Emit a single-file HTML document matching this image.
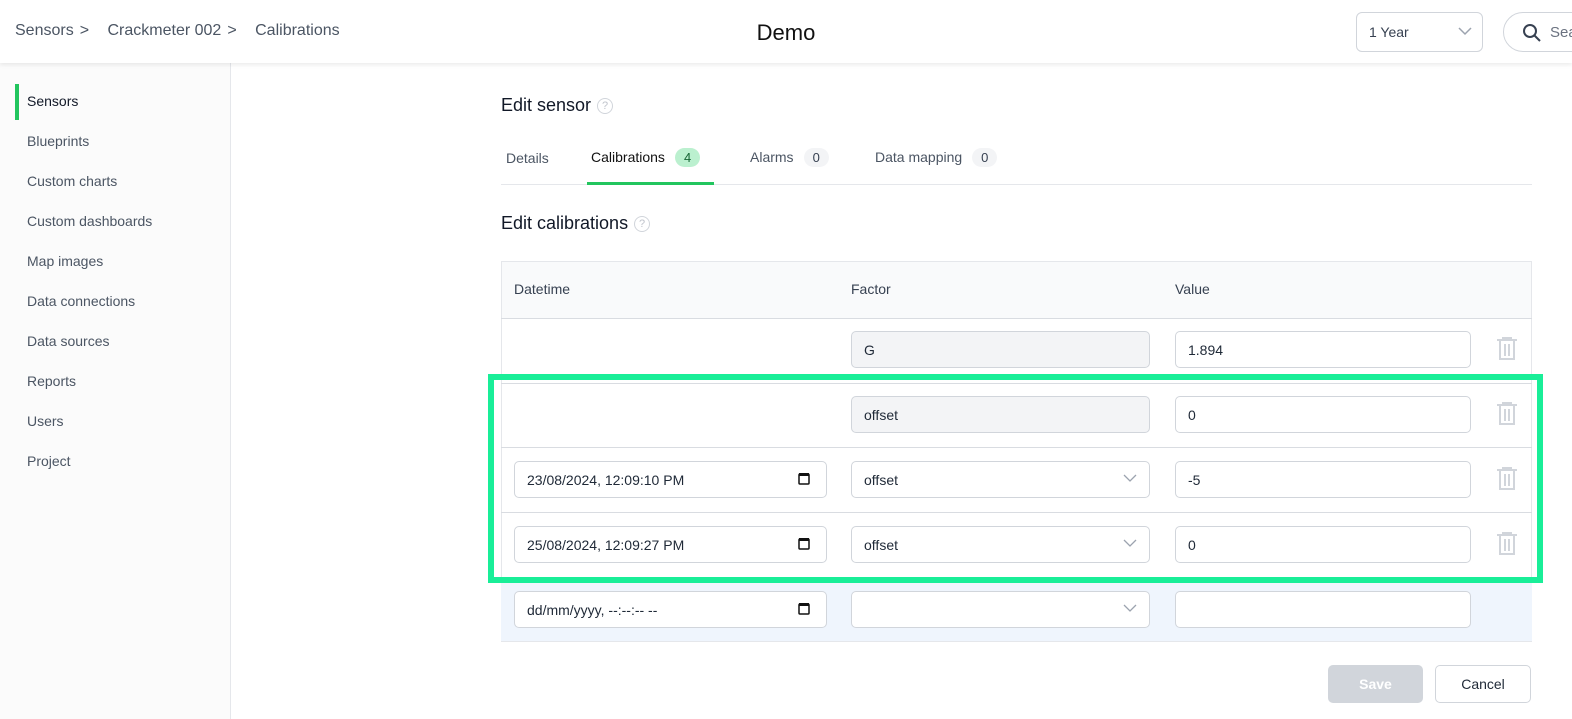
<!DOCTYPE html>
<html><head><meta charset="utf-8"><style>
*{box-sizing:border-box;margin:0;padding:0}
body{width:1572px;height:719px;overflow:hidden;background:#fff;font-family:"Liberation Sans",sans-serif;color:#111827;position:relative}
.hdr{position:absolute;left:0;top:0;width:1572px;height:63px;background:#fff;box-shadow:0 2px 4px rgba(0,0,0,.08);z-index:2}
.bc{position:absolute;left:15px;top:22px;font-size:16px;color:#4b5563}
.bc span{margin-right:6px}
.title{position:absolute;left:0;width:1572px;text-align:center;top:20px;font-size:22px;color:#111}
.sel{position:absolute;left:1356px;top:12px;width:127px;height:40px;border:1px solid #d1d5db;border-radius:6px;font-size:14px;padding:11px 12px;color:#374151}
.srch{position:absolute;left:1503px;top:12px;width:120px;height:40px;border:1px solid #d1d5db;border-radius:20px;font-size:15px;padding:11px 0 0 46px;color:#6b7280}
.side{position:absolute;left:0;top:63px;width:231px;height:656px;background:#fbfbfb;border-right:1px solid #e5e7eb}
.side div{position:absolute;left:27px;font-size:14px;color:#4b5563}
.abs{position:absolute}
.inp{position:absolute;height:37px;border:1px solid #d1d5db;border-radius:5px;background:#fff;font-size:14px;color:#1f2937;padding:10px 12px}
.ro{background:#f3f4f6}
.row{position:absolute;left:501px;width:1031px;border-top:1px solid #d9dce1}
.badge{display:inline-block;border-radius:10px;padding:2px 9px;font-size:13px;margin-left:10px;background:#f3f4f6;color:#374151}
.help{display:inline-block;width:16px;height:16px;border:1px solid #d1d5db;border-radius:50%;font-size:11px;color:#c0c4cc;text-align:center;line-height:14px;vertical-align:middle;margin-left:6px}
</style></head><body>
<div class="hdr">
<div class="bc"><span>Sensors</span><span>&gt;</span> <span style="margin-left:8px">Crackmeter 002</span><span>&gt;</span> <span style="margin-left:8px">Calibrations</span></div>
<div class="title">Demo</div>
<div class="sel">1 Year<svg style="position:absolute;right:10px;top:14px" width="14" height="9"><path d="M1 1l6 6 6-6" fill="none" stroke="#9ca3af" stroke-width="1.5"/></svg></div>
<div class="srch"><svg style="position:absolute;left:18px;top:10px" width="20" height="20"><circle cx="8" cy="8" r="6" fill="none" stroke="#374151" stroke-width="2"/><path d="M12.5 12.5L18 18" stroke="#374151" stroke-width="2"/></svg>Search</div>
</div>
<div class="side">
<span style="position:absolute;left:15px;top:21px;width:4px;height:36px;background:#22c55e"></span>
<div style="top:30px;color:#111827">Sensors</div>
<div style="top:70px">Blueprints</div>
<div style="top:110px">Custom charts</div>
<div style="top:150px">Custom dashboards</div>
<div style="top:190px">Map images</div>
<div style="top:230px">Data connections</div>
<div style="top:270px">Data sources</div>
<div style="top:310px">Reports</div>
<div style="top:350px">Users</div>
<div style="top:390px">Project</div>
</div>
<div class="abs" style="left:501px;top:95px;font-size:18px">Edit sensor<span class="help">?</span></div>
<div class="abs" style="left:501px;top:184px;width:1031px;border-top:1px solid #e5e7eb"></div>
<div class="abs" style="left:506px;top:150px;font-size:14px;color:#4b5563">Details</div>
<div class="abs" style="left:591px;top:148px;font-size:14px;color:#111">Calibrations<span class="badge" style="background:#bbf0cf;color:#166534">4</span></div>
<div class="abs" style="left:587px;top:182px;width:127px;height:3px;background:#22c55e"></div>
<div class="abs" style="left:750px;top:148px;font-size:14px;color:#4b5563">Alarms<span class="badge">0</span></div>
<div class="abs" style="left:875px;top:148px;font-size:14px;color:#4b5563">Data mapping<span class="badge">0</span></div>
<div class="abs" style="left:501px;top:213px;font-size:18px">Edit calibrations<span class="help">?</span></div>
<div class="abs" style="left:501px;top:261px;width:1031px;height:381px;border:1px solid #e5e7eb;background:#fff"></div>
<div class="abs" style="left:502px;top:262px;width:1029px;height:56px;background:#f9fafb"></div>
<div class="abs" style="left:514px;top:281px;font-size:14px;color:#374151">Datetime</div>
<div class="abs" style="left:851px;top:281px;font-size:14px;color:#374151">Factor</div>
<div class="abs" style="left:1175px;top:281px;font-size:14px;color:#374151">Value</div>
<div class="row" style="top:318px"></div>
<div class="row" style="top:383px"></div>
<div class="row" style="top:447px"></div>
<div class="row" style="top:512px"></div>
<div class="row" style="top:577px;height:64px;background:#eff5fd"></div>
<div class="inp ro" style="left:851px;top:331px;width:299px">G</div>
<div class="inp" style="left:1175px;top:331px;width:296px">1.894</div>
<div class="inp ro" style="left:851px;top:396px;width:299px">offset</div>
<div class="inp" style="left:1175px;top:396px;width:296px">0</div>
<div class="inp" style="left:514px;top:461px;width:313px">23/08/2024, 12:09:10 PM</div>
<div class="inp" style="left:851px;top:461px;width:299px">offset</div>
<div class="inp" style="left:1175px;top:461px;width:296px">-5</div>
<div class="inp" style="left:514px;top:526px;width:313px">25/08/2024, 12:09:27 PM</div>
<div class="inp" style="left:851px;top:526px;width:299px">offset</div>
<div class="inp" style="left:1175px;top:526px;width:296px">0</div>
<div class="inp" style="left:514px;top:591px;width:313px">dd/mm/yyyy, --:--:-- --</div>
<div class="inp" style="left:851px;top:591px;width:299px"></div>
<div class="inp" style="left:1175px;top:591px;width:296px"></div>
<svg class="abs" style="left:0;top:0" width="1572" height="719">
<g fill="none" stroke="#111" stroke-width="1.5">
<rect x="799" y="474" width="10" height="10" rx="1"/><rect x="799" y="539" width="10" height="10" rx="1"/><rect x="799" y="604" width="10" height="10" rx="1"/>
</g>
<g fill="#111"><rect x="799" y="473" width="10" height="3"/><rect x="799" y="538" width="10" height="3"/><rect x="799" y="603" width="10" height="3"/></g>
<g fill="none" stroke="#9ca3af" stroke-width="1.3">
<path d="M1124 475l6 6 6-6M1124 540l6 6 6-6M1124 605l6 6 6-6"/>
</g>
<g fill="none" stroke="#d1d5db" stroke-width="2">
<path d="M1497 340h20M1503 340v-2h8v2M1500 340v19h14v-19M1505 344v12M1509 344v12"/>
<path d="M1497 405h20M1503 405v-2h8v2M1500 405v19h14v-19M1505 409v12M1509 409v12"/>
<path d="M1497 470h20M1503 470v-2h8v2M1500 470v19h14v-19M1505 474v12M1509 474v12"/>
<path d="M1497 535h20M1503 535v-2h8v2M1500 535v19h14v-19M1505 539v12M1509 539v12"/>
</g>
<rect x="491" y="377" width="1049" height="203" fill="none" stroke="#19ee98" stroke-width="6"/>
</svg>
<div class="abs" style="left:1328px;top:665px;width:95px;height:38px;background:#d1d5db;border-radius:5px;color:#fff;font-size:14px;font-weight:bold;text-align:center;line-height:38px">Save</div>
<div class="abs" style="left:1435px;top:665px;width:96px;height:38px;border:1px solid #d1d5db;border-radius:5px;font-size:14px;text-align:center;line-height:36px;color:#1f2937">Cancel</div>
</body></html>
